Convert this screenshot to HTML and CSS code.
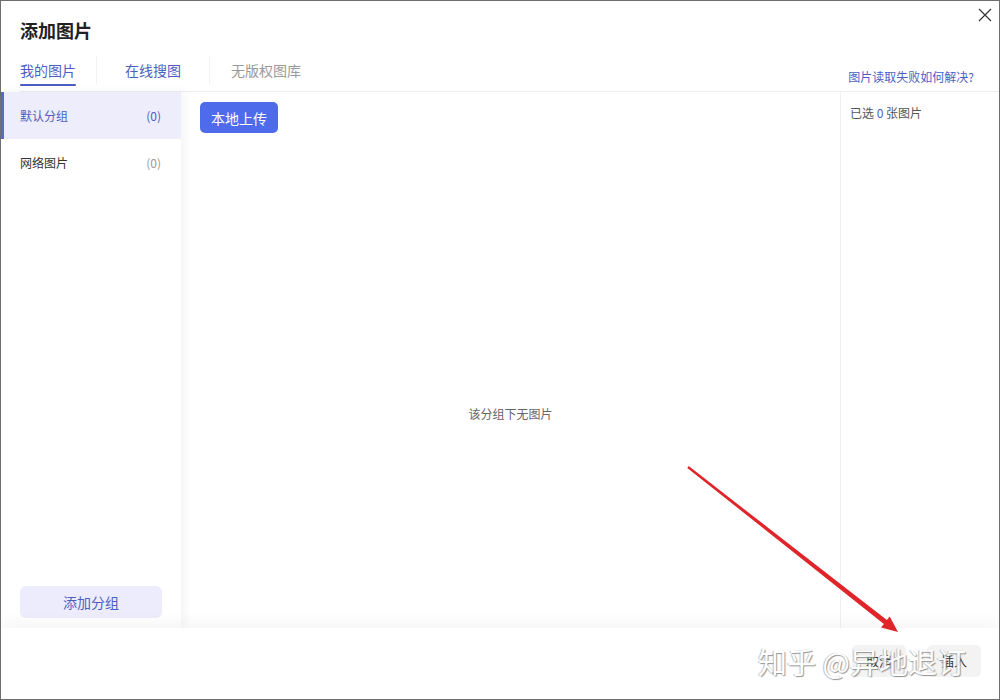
FILE: index.html
```html
<!DOCTYPE html>
<html lang="zh-CN">
<head>
    <meta charset="UTF-8">
    <meta name="viewport" content="width=device-width, initial-scale=1.0">
    <title>添加图片</title>
    <link rel="stylesheet" href="styles.css">
</head>
<body>

<div class="dialog">
    <div class="dialog-head">
        <h1 class="title">添加图片</h1>
        <span class="close">
            <svg width="14" height="14" viewBox="0 0 14 14"><path d="M1 1L13 13M13 1L1 13" stroke="#333" stroke-width="1.2" fill="none"/></svg>
        </span>
        <div class="tabs">
            <a class="tab active" href="#">我的图片</a>
            <span class="tab-sep"></span>
            <a class="tab tab-online" href="#">在线搜图</a>
            <span class="tab-sep"></span>
            <a class="tab tab-free" href="#">无版权图库</a>
            <a class="help-link" href="#">图片读取失败如何解决?</a>
        </div>
    </div>

    <div class="dialog-body">
        <!-- 左侧分组 -->
        <div class="sidebar">
            <div class="group active">
                <span>默认分组</span>
                <span class="count">(0)</span>
            </div>
            <div class="group">
                <span>网络图片</span>
                <span class="count">(0)</span>
            </div>
            <div class="sidebar-foot">
                <button class="add-group">添加分组</button>
            </div>
        </div>

        <!-- 图片列表 -->
        <div class="main">
            <button class="upload">本地上传</button>
            <div class="empty">该分组下无图片</div>
        </div>

        <!-- 已选 -->
        <div class="selected">
            已选 <span class="num">0</span> 张图片
        </div>
    </div>

    <div class="dialog-foot">
        <button class="btn">取消</button>
        <button class="btn">插入</button>
    </div>

    <div class="watermark">知乎 @异地退订</div>

    <svg class="arrow" width="1000" height="700" viewBox="0 0 1000 700">
        <polygon points="687.3,467.9 883.9,624.1 881.1,627.6 898,632 889.7,616.6 886.9,620.1 688.7,466.1" fill="#e0252a"/>
    </svg>
</div>

</body>
</html>
```

FILE: styles.css
```css
body {
    margin: 0;
    padding: 0;
    font-family: "Noto Sans CJK SC", "Liberation Sans", sans-serif;
    color: #333;
    background-color: #fff;
}
button {
    font-family: inherit;
    border: none;
    cursor: pointer;
}

.dialog {
    position: relative;
    width: 1000px;
    height: 700px;
    box-sizing: border-box;
    border: 1px solid #6e6e6e;
    display: flex;
    flex-direction: column;
    background-color: #fff;
    overflow: hidden;
}

/* 顶部标题与标签 */
.dialog-head {
    padding: 17px 0 0 19px;
}
.title {
    margin: 0;
    font-size: 18px;
    line-height: 24px;
    font-weight: bold;
    color: #222;
}
.close {
    position: absolute;
    top: 2px;
    right: 7px;
    width: 14px;
    height: 14px;
}
.tabs {
    display: flex;
    align-items: flex-start;
    height: 31px;
    padding-top: 18px;
    border-bottom: 1px solid #eee;
    padding-right: 25px;
}
.tab {
    font-size: 14px;
    line-height: 20px;
    text-decoration: none;
    color: #4c5fc0;
    position: relative;
}
.tab.active::after {
    content: "";
    position: absolute;
    left: 0;
    right: 0;
    bottom: -6px;
    height: 2px;
    border-radius: 1px;
    background-color: #4c5fc0;
}
.tab-online {
    margin: 0 28px;
}
.tab-free {
    margin-left: 21px;
    color: #999;
}
.tab-sep {
    width: 1px;
    height: 28px;
    margin-top: -4px;
    background-color: #f2f2f2;
}
.tab.active + .tab-sep {
    margin-left: 20px;
}
.help-link {
    margin-left: auto;
    margin-top: 8px;
    font-size: 12px;
    line-height: 17px;
    color: #4c5fc0;
    text-decoration: none;
}

/* 主体 */
.dialog-body {
    flex: 1;
    display: flex;
    min-height: 0;
}
.sidebar {
    width: 180px;
    display: flex;
    flex-direction: column;
    box-shadow: 3px 0 10px rgba(0, 0, 0, 0.05);
    position: relative;
    z-index: 1;
}
.group {
    display: flex;
    justify-content: space-between;
    align-items: center;
    height: 47px;
    padding: 0 20px 0 19px;
    font-size: 12px;
    color: #333;
}
.group.active {
    background-color: #ededfc;
    border-left: 3px solid #5a6ac4;
    padding-left: 16px;
    color: #4c5fc0;
}
.group .count {
    color: #999;
}
.group.active .count {
    color: #4c5fc0;
}
.sidebar-foot {
    margin-top: auto;
    padding: 0 19px 10px 19px;
}
.add-group {
    width: 100%;
    height: 32px;
    background-color: #ececfc;
    color: #4c5fc0;
    font-size: 14px;
    border-radius: 6px;
}

.main {
    flex: 1;
    padding: 10px 19px;
    display: flex;
    flex-direction: column;
    align-items: flex-start;
}
.upload {
    height: 31px;
    padding: 0 11px;
    background-color: #4e6bec;
    color: #fff;
    font-size: 14px;
    border-radius: 5px;
}
.empty {
    align-self: stretch;
    text-align: center;
    margin-top: 272px;
    font-size: 12px;
    color: #666;
}

.selected {
    width: 149px;
    border-left: 1px solid #f0f0f0;
    padding: 12px 0 0 9px;
    font-size: 12px;
    color: #555;
}
.selected .num {
    color: #4c5fc0;
}

/* 底部按钮 */
.dialog-foot {
    height: 71px;
    display: flex;
    justify-content: flex-end;
    align-items: center;
    gap: 21px;
    padding: 0 18px 6px 0;
    box-sizing: border-box;
    box-shadow: 0 -6px 14px rgba(0, 0, 0, 0.04);
    position: relative;
    z-index: 2;
    background-color: #fff;
}
.btn {
    width: 54px;
    height: 32px;
    border-radius: 5px;
    background-color: #f3f3f3;
    color: #333;
    font-size: 13px;
}

.watermark {
    position: absolute;
    left: 757px;
    top: 640px;
    font-size: 29px;
    line-height: 40px;
    color: #fff;
    text-shadow: 1px 1px 1px #888, -1px 0 1px #bbb;
    opacity: 0.9;
    z-index: 3;
    white-space: nowrap;
}
.arrow {
    position: absolute;
    left: -1px;
    top: -1px;
    z-index: 4;
    pointer-events: none;
}
```
